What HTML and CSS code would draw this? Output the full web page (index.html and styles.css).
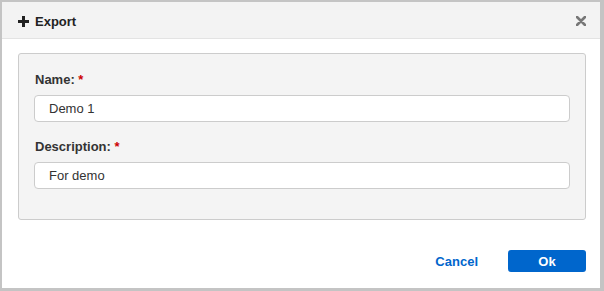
FILE: index.html
```html
<!DOCTYPE html>
<html lang="en">
    <head>
        <meta charset="UTF-8" />
        <meta name="viewport" content="width=device-width, initial-scale=1.0" />
        <title>Export</title>
        <link rel="stylesheet" href="styles.css">
    </head>
    <body>
        <div class="modal">
            <div class="modal-header">
                <div class="modal-title">
                    <svg class="title-icon" width="11" height="11" viewBox="0 0 11 11">
                        <path d="M5.5 0v11M0 5.5h11" stroke="#222" stroke-width="3" />
                    </svg>
                    <span>Export</span>
                </div>
                <button class="modal-close" title="Close">
                    <svg width="10" height="10" viewBox="0 0 10 10">
                        <path d="M1 1l8 8M9 1l-8 8" stroke="#777" stroke-width="2.6" stroke-linecap="round" />
                    </svg>
                </button>
            </div>
            <div class="modal-body">
                <div class="panel">
                    <div class="form-group">
                        <label class="form-label">Name: <span class="required">*</span></label>
                        <input class="form-input" type="text" value="Demo 1">
                    </div>
                    <div class="form-group">
                        <label class="form-label">Description: <span class="required">*</span></label>
                        <input class="form-input" type="text" value="For demo">
                    </div>
                </div>
            </div>
            <div class="modal-footer">
                <button class="btn btn-link">Cancel</button>
                <button class="btn btn-primary">Ok</button>
            </div>
        </div>
    </body>
</html>
```

FILE: styles.css
```css
:root {
    --blue: #0066cc;
    --border: #cccccc;
    --panel-bg: #f4f4f4;
    --text: #333333;
}

html,
body {
    margin: 0;
    height: 100%;
}

body {
    font-family: "Liberation Sans", Arial, sans-serif;
    font-size: 13px;
    color: var(--text);
}

.modal {
    width: 604px;
    height: 291px;
    box-sizing: border-box;
    border-style: solid;
    border-color: #c4c4c4;
    border-width: 2px 4px 3px 2px;
    background-color: #fff;
    display: flex;
    flex-direction: column;
}

/* Header */
.modal-header {
    height: 37px;
    box-sizing: border-box;
    background-color: #f3f3f3;
    border-bottom: 1px solid #e3e3e3;
    display: flex;
    align-items: center;
    justify-content: space-between;
    padding: 2px 14px 0 16px;
}

.modal-title {
    display: flex;
    align-items: center;
    gap: 6px;
    font-weight: bold;
    color: #222;
}

.title-icon {
    display: block;
}

.modal-close {
    border: 0;
    background: none;
    padding: 0;
    cursor: pointer;
    width: 10px;
    height: 10px;
}

.modal-close svg {
    display: block;
}

/* Body */
.modal-body {
    padding: 14px 14px 0 16px;
}

.panel {
    background-color: var(--panel-bg);
    border: 1px solid var(--border);
    border-radius: 3px;
    padding: 15px 15px 30px;
}

.form-group + .form-group {
    margin-top: 14px;
}

.form-label {
    display: block;
    font-weight: bold;
    line-height: 22px;
    margin-bottom: 4px;
    padding-left: 1px;
}

.required {
    color: #cc0000;
}

.form-input {
    display: block;
    width: 100%;
    height: 27px;
    box-sizing: border-box;
    border: 1px solid var(--border);
    border-radius: 4px;
    background-color: #fff;
    padding: 0 14px;
    font-family: inherit;
    font-size: 13px;
    color: var(--text);
    outline: none;
}

/* Footer */
.modal-footer {
    margin-top: auto;
    display: flex;
    justify-content: flex-end;
    align-items: center;
    gap: 30px;
    padding: 0 14px 16px 16px;
}

.btn {
    font-family: inherit;
    font-size: 13px;
    font-weight: bold;
    border: 0;
    cursor: pointer;
    padding: 0;
}

.btn-link {
    background: none;
    color: var(--blue);
}

.btn-primary {
    width: 78px;
    height: 22px;
    border-radius: 3px;
    background-color: var(--blue);
    color: #fff;
}
```
